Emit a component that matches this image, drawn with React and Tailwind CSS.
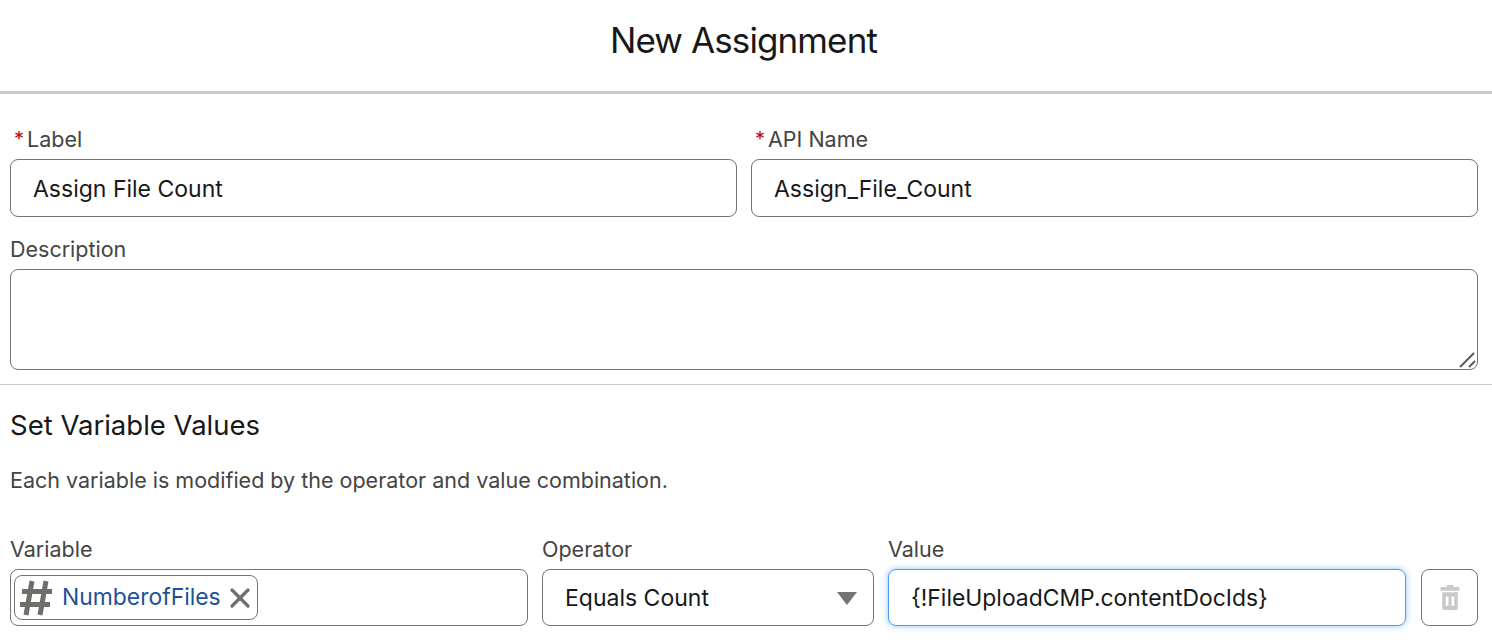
import React from "react";
import { X } from "lucide-react";

const font = "font-['Inter','Liberation_Sans',sans-serif]";

const FieldLabel = ({ required, children }) => (
  <div className="flex h-[20px] items-center text-[21.500px] leading-[20px] text-[#444444]">
    {required && <span className="ml-[4px] mr-[4px] w-[9px] text-[20px] text-[#ba0517]">*</span>}
    {children}
  </div>
);

const TextBox = ({ children }) => (
  <div className="mt-[10px] flex h-[58px] items-center rounded-[8px] border border-[#747474] bg-white pl-[22px] pt-[2px] text-[23px] text-[#181818]">
    {children}
  </div>
);

const HashIcon = () => (
  <svg width="34" height="36" viewBox="0 0 34 36" fill="none" stroke="#706e6b" strokeWidth="5">
    <path d="M13 1 7 35M27 1l-6 34M3 11.500h30M1 24.500h30" />
  </svg>
);

const TrashIcon = () => (
  <svg width="20" height="25" viewBox="0 0 18 24" fill="#c9c9c9">
    <path d="M6 0h6v2h6v3.500H0V2h6z" />
    <path fillRule="evenodd" d="M1.500 7h15v15a2 2 0 0 1-2 2h-11a2 2 0 0 1-2-2zM5 11v9h2.500v-9zm5.500 0v9H13v-9z" />
  </svg>
);

const App = () => {
  return (
    <div className={`${font} h-[642px] w-[1492px] overflow-hidden bg-white`}>
      <header className="flex h-[94px] items-center justify-center border-b-[3px] border-[#c9c9c9] pb-[11px] pr-[5px] text-[35px] tracking-[-0.9px] text-[#181818]">
        New Assignment
      </header>

      <div className="pl-[10px] pr-[14px] pt-[35px]">
        <div className="grid grid-cols-2 gap-x-[14px]">
          <div>
            <FieldLabel required>Label</FieldLabel>
            <TextBox>Assign File Count</TextBox>
          </div>
          <div>
            <FieldLabel required>API Name</FieldLabel>
            <TextBox>Assign_File_Count</TextBox>
          </div>
        </div>

        <div className="mt-[22px]">
          <FieldLabel>Description</FieldLabel>
          <div className="relative mt-[10px] h-[101px] rounded-[8px] border border-[#747474] bg-white">
            <svg className="absolute bottom-0 right-0" width="18" height="18" viewBox="0 0 18 18" stroke="#5c5c5c" strokeWidth="2">
              <path d="M1 16 15 2M10 16l6-6" />
            </svg>
          </div>
        </div>
      </div>

      <div className="mt-[14px] border-t border-[#c9c9c9] px-[10px]">
        <h2 className="mt-[24px] text-[27.500px] leading-[32px] text-[#181818]">Set Variable Values</h2>
        <p className="mt-[25px] text-[21.500px] leading-[28px] text-[#444444]">
          Each variable is modified by the operator and value combination.
        </p>

        <div className="mt-[45px] flex gap-x-[14px]">
          <div className="w-[518px]">
            <FieldLabel>Variable</FieldLabel>
            <div className="mt-[10px] flex h-[57px] items-center rounded-[8px] border border-[#747474] pl-[3px]">
              <div className="flex h-[45px] w-[244px] items-center rounded-[8px] border border-[#747474] pl-[4px]">
                <HashIcon />
                <span className="ml-[9px] text-[22.900px] text-[#1b5297]">NumberofFiles</span>
                <X className="ml-[3px] shrink-0 text-[#706e6b]" size={32} strokeWidth={2.400} />
              </div>
            </div>
          </div>

          <div className="w-[332px]">
            <FieldLabel>Operator</FieldLabel>
            <div className="mt-[10px] flex h-[57px] items-center justify-between rounded-[8px] border border-[#747474] pl-[22px] pr-[16px] pt-[1px] text-[23px] text-[#181818]">
              Equals Count
              <span className="h-0 w-0 border-x-[10.500px] border-t-[13px] border-x-transparent border-t-[#747474]" />
            </div>
          </div>

          <div className="w-[518px]">
            <FieldLabel>Value</FieldLabel>
            <div className="mt-[10px] flex h-[57px] items-center rounded-[8px] border border-[#4f9bea] pl-[22px] pt-[1px] text-[22.900px] text-[#181818] shadow-[0_0_6px_#8fc3f5]">
              {"{!FileUploadCMP.contentDocIds}"}
            </div>
          </div>

          <div className="ml-[1px] mt-[30px] flex h-[57px] w-[57px] items-center justify-center rounded-[8px] border border-[#747474]">
            <TrashIcon />
          </div>
        </div>
      </div>
    </div>
  );
};

export default App;
